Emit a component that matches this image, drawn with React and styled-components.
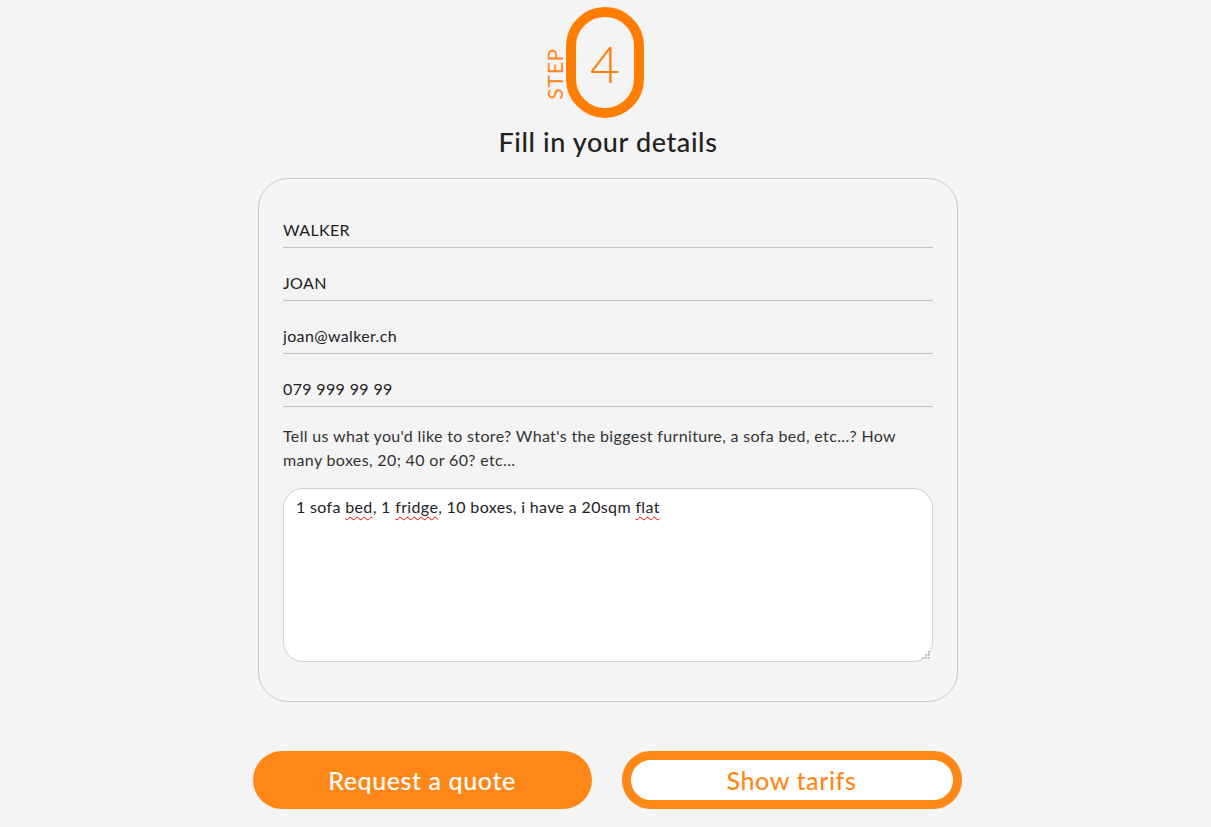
import React from 'react';
import styled, { createGlobalStyle } from 'styled-components';

const GlobalStyle = createGlobalStyle`
  html, body {
    margin: 0;
    padding: 0;
    background: #f4f4f4;
    font-family: 'Lato', 'Noto Sans', sans-serif;
    color: #222;
  }
  * { box-sizing: border-box; }
`;

const orange = '#ff8718';

const Page = styled.div`
  display: flex;
  flex-direction: column;
  align-items: center;
  padding: 7px 0 0 5px;
  min-height: 827px;
  letter-spacing: 0.35px;
`;

const Step = styled.div`
  display: flex;
  align-items: flex-end;
  margin-left: -27px;
`;

const StepLabel = styled.span`
  writing-mode: vertical-rl;
  transform: rotate(180deg);
  font-size: 21px;
  color: ${orange};
  letter-spacing: 0.8px;
  line-height: 20px;
  margin-bottom: 18px;
  margin-right: 1px;
`;

const Ring = styled.div`
  width: 78px;
  height: 111px;
  border: 10px solid #ff7d00;
  border-radius: 40px;
  display: flex;
  align-items: center;
  justify-content: center;
  font-size: 52px;
  font-weight: 300;
  color: #ff7d00;
`;

const Title = styled.h1`
  margin: 8px 0 20px;
  font-size: 27px;
  font-weight: 500;
  letter-spacing: 0.6px;
  color: #222;
  line-height: 32px;
`;

const Card = styled.form`
  width: 700px;
  border: 1px solid #c8c8c8;
  border-radius: 30px;
  padding: 31px 24px 39px;
  display: flex;
  flex-direction: column;
`;

const Input = styled.input`
  height: 38px;
  border: none;
  border-bottom: 1px solid #c4c4c4;
  background: transparent;
  font-family: inherit;
  font-size: 16px;
  letter-spacing: 0.35px;
  color: #222;
  padding: 2px 0 0;
  outline: none;
  & + & { margin-top: 15px; }
`;

const Label = styled.p`
  margin: 17px 0 16px;
  font-size: 16px;
  line-height: 24px;
  color: #333;
`;

const Area = styled.div`
  position: relative;
  height: 174px;
  background: #fff;
  border: 1px solid #cfcfcf;
  border-radius: 20px;
  padding: 8px 12px;
  font-size: 16px;
  line-height: 20px;
  color: #222;
`;

const Misspelt = styled.span`
  text-decoration: underline wavy #e00;
  text-decoration-thickness: 1px;
  text-underline-offset: 3px;
`;

const Grip = styled.svg`
  position: absolute;
  right: 2px;
  bottom: 2px;
`;

const Buttons = styled.div`
  display: flex;
  gap: 30px;
  margin-top: 49px;
  margin-left: -2px;
`;

const Button = styled.button`
  width: ${p => (p.$outline ? '340px' : '339px')};
  height: 58px;
  border-radius: 29px;
  border: ${p => (p.$outline ? `9px solid ${orange}` : 'none')};
  background: ${p => (p.$outline ? '#fff' : orange)};
  color: ${p => (p.$outline ? orange : '#fff')};
  font-family: inherit;
  font-size: 25px;
  font-weight: 500;
  letter-spacing: 0.6px;
  cursor: pointer;
`;

export default function App() {
  return (
    <>
      <GlobalStyle />
      <Page>
        <Step>
          <StepLabel>STEP</StepLabel>
          <Ring>4</Ring>
        </Step>
        <Title>Fill in your details</Title>
        <Card onSubmit={e => e.preventDefault()}>
          <Input defaultValue="WALKER" />
          <Input defaultValue="JOAN" />
          <Input defaultValue="joan@walker.ch" />
          <Input defaultValue="079 999 99 99" />
          <Label>
            Tell us what you'd like to store? What's the biggest furniture, a sofa bed, etc...? How
            <br />
            many boxes, 20; 40 or 60? etc...
          </Label>
          <Area>
            1 sofa <Misspelt>bed</Misspelt>, 1 <Misspelt>fridge</Misspelt>, 10 boxes, i have a 20sqm{' '}
            <Misspelt>flat</Misspelt>
            <Grip width="10" height="10" viewBox="0 0 10 10">
              <g fill="#aaa">
                <rect x="8" y="2" width="1.5" height="1.5" />
                <rect x="5" y="5" width="1.5" height="1.5" />
                <rect x="8" y="5" width="1.5" height="1.5" />
                <rect x="2" y="8" width="1.5" height="1.5" />
                <rect x="5" y="8" width="1.5" height="1.5" />
                <rect x="8" y="8" width="1.5" height="1.5" />
              </g>
            </Grip>
          </Area>
        </Card>
        <Buttons>
          <Button type="button">Request a quote</Button>
          <Button type="button" $outline>Show tarifs</Button>
        </Buttons>
      </Page>
    </>
  );
}
